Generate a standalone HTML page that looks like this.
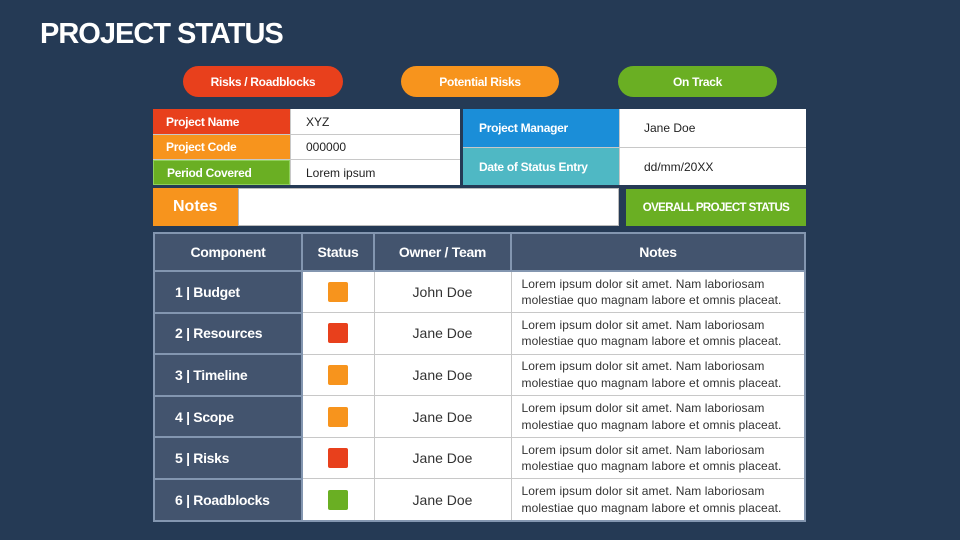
<!DOCTYPE html>
<html><head><meta charset="utf-8"><style>
*{margin:0;padding:0;box-sizing:border-box}
body{width:960px;height:540px;background:#253a55;font-family:"Liberation Sans",sans-serif;position:relative;overflow:hidden}
.a{position:absolute;display:flex;align-items:center}
.t{color:#fff;font-weight:bold}
.pill{position:absolute;top:66px;height:31px;border-radius:16px;color:#fff;font-weight:bold;font-size:12px;display:flex;align-items:center;justify-content:center;letter-spacing:-0.3px}
.lab{color:#fff;font-weight:bold;font-size:12px;padding-left:13px;letter-spacing:-0.3px}
.val{background:#fff;color:#222;font-size:12px;padding-left:15px}
table{position:absolute;left:153px;top:232px;width:653px;border-collapse:collapse;border:2px solid #8396b0}
td,th{border:1px solid #c8c8c8;height:41.6px}
th{background:#43546e;color:#fff;font-size:14px;border:2px solid #8396b0;height:38px;letter-spacing:-0.3px}
td.c{background:#43546e;color:#fff;font-weight:bold;font-size:14px;padding-left:20px;border:2px solid #8396b0;letter-spacing:-0.3px}
td.s{background:#fff;text-align:center}
td.s span{display:inline-block;width:20px;height:20px;border-radius:2px;vertical-align:middle}
td.o{background:#fff;text-align:center;font-size:14px;color:#333}
td.n{background:#fff;font-size:12px;color:#333;padding-left:10px;line-height:16.5px;letter-spacing:0.1px;white-space:nowrap}
</style></head><body>
<div class="a t" style="left:40px;top:18px;font-size:29px;letter-spacing:-1px">PROJECT STATUS</div>
<div class="pill" style="left:183px;width:160px;background:#e8401c">Risks / Roadblocks</div>
<div class="pill" style="left:401px;width:158px;background:#f7941d">Potential Risks</div>
<div class="pill" style="left:618px;width:159px;background:#6aaf23">On Track</div>

<div class="a" style="left:153px;top:109px;width:307px;height:76px;background:#c8c8c8"></div>
<div class="a" style="left:463px;top:109px;width:343px;height:76px;background:#c8c8c8"></div>
<div class="a lab" style="left:153px;top:109px;width:137px;height:25px;background:#e8401c">Project Name</div>
<div class="a lab" style="left:153px;top:135px;width:137px;height:24px;background:#f7941d">Project Code</div>
<div class="a lab" style="left:153px;top:160px;width:137px;height:25px;background:#6aaf23;border:1px solid #8fd05a">Period Covered</div>
<div class="a val" style="left:291px;top:109px;width:169px;height:25px">XYZ</div>
<div class="a val" style="left:291px;top:135px;width:169px;height:24px">000000</div>
<div class="a val" style="left:291px;top:160px;width:169px;height:25px">Lorem ipsum</div>

<div class="a lab" style="left:463px;top:109px;width:156px;height:38px;background:#1b8ed8;padding-left:16px">Project Manager</div>
<div class="a lab" style="left:463px;top:148px;width:156px;height:37px;background:#4fb8c4;padding-left:16px">Date of Status Entry</div>
<div class="a val" style="left:620px;top:109px;width:186px;height:38px;padding-left:24px">Jane Doe</div>
<div class="a val" style="left:620px;top:148px;width:186px;height:37px;padding-left:24px">dd/mm/20XX</div>

<div class="a t" style="left:153px;top:188px;width:85px;height:38px;background:#f7941d;font-size:16px;padding-left:20px">Notes</div>
<div class="a" style="left:238px;top:188px;width:381px;height:38px;background:#fff;border:1px solid #bbb"></div>
<div class="a t" style="left:626px;top:189px;width:180px;height:37px;background:#6aaf23;font-size:11.5px;justify-content:center;letter-spacing:-0.6px">OVERALL PROJECT STATUS</div>

<table>
<tr><th style="width:148px">Component</th><th style="width:72px">Status</th><th style="width:137px">Owner / Team</th><th>Notes</th></tr>
<tr><td class="c">1 | Budget</td><td class="s"><span style="background:#f7941d"></span></td><td class="o">John Doe</td><td class="n">Lorem ipsum dolor sit amet. Nam laboriosam<br>molestiae quo magnam labore et omnis placeat.</td></tr>
<tr><td class="c">2 | Resources</td><td class="s"><span style="background:#e8401c"></span></td><td class="o">Jane Doe</td><td class="n">Lorem ipsum dolor sit amet. Nam laboriosam<br>molestiae quo magnam labore et omnis placeat.</td></tr>
<tr><td class="c">3 | Timeline</td><td class="s"><span style="background:#f7941d"></span></td><td class="o">Jane Doe</td><td class="n">Lorem ipsum dolor sit amet. Nam laboriosam<br>molestiae quo magnam labore et omnis placeat.</td></tr>
<tr><td class="c">4 | Scope</td><td class="s"><span style="background:#f7941d"></span></td><td class="o">Jane Doe</td><td class="n">Lorem ipsum dolor sit amet. Nam laboriosam<br>molestiae quo magnam labore et omnis placeat.</td></tr>
<tr><td class="c">5 | Risks</td><td class="s"><span style="background:#e8401c"></span></td><td class="o">Jane Doe</td><td class="n">Lorem ipsum dolor sit amet. Nam laboriosam<br>molestiae quo magnam labore et omnis placeat.</td></tr>
<tr><td class="c">6 | Roadblocks</td><td class="s"><span style="background:#6aaf23"></span></td><td class="o">Jane Doe</td><td class="n">Lorem ipsum dolor sit amet. Nam laboriosam<br>molestiae quo magnam labore et omnis placeat.</td></tr>
</table>
</body></html>
